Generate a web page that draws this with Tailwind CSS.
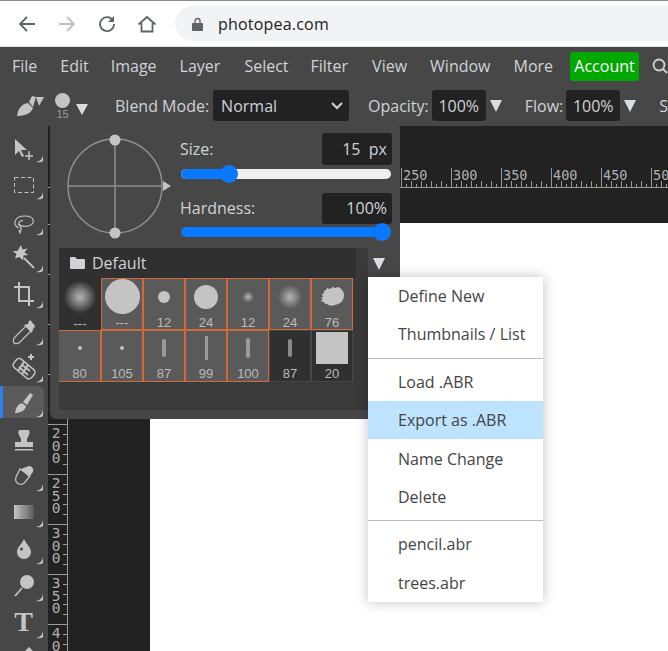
<!DOCTYPE html>
<html lang="en">

<head>
    <meta charset="UTF-8">
    <title>Photopea</title>
    <script src="https://cdn.jsdelivr.net/npm/@tailwindcss/browser@4"></script>
</head>

<body class="bg-[#222222] overflow-hidden">
    <div class="relative w-[668px] h-[651px] overflow-hidden flex flex-col font-['Open_Sans',sans-serif]">

        <!-- browser bar -->
        <div class="h-[47px] shrink-0 bg-white border-t border-[#8c8c8c] border-b border-b-[#e2e2e2] flex items-center">
            <div class="w-[175px] shrink-0 flex items-center pl-[17px] gap-[20px]">
                <svg class="w-5 h-5" viewBox="0 0 20 20" fill="none" stroke="#5f6368" stroke-width="1.8"><path d="M18 10H3M10 3l-7 7 7 7" /></svg>
                <svg class="w-5 h-5" viewBox="0 0 20 20" fill="none" stroke="#bdc1c6" stroke-width="1.8"><path d="M2 10h15M10 3l7 7-7 7" /></svg>
                <svg class="w-5 h-5" viewBox="0 0 20 20" fill="none" stroke="#5f6368" stroke-width="1.8"><path d="M16 6.5A7 7 0 1 0 17 10" /><path d="M17 2v6h-6" fill="#5f6368" stroke="none" /></svg>
                <svg class="w-5 h-5" viewBox="0 0 20 20" fill="none" stroke="#5f6368" stroke-width="1.8"><path d="M1.5 10.5 10 3l8.500 7.500M4.500 9v8.500h11V9" /></svg>
            </div>
            <div class="flex-1 h-[35px] bg-[#f1f3f4] rounded-l-full flex items-center pl-[17px] gap-[15px]">
                <svg class="w-[11px] h-[14px]" viewBox="0 0 11 14" fill="#5f6368"><path d="M1 6h9a1 1 0 0 1 1 1v6a1 1 0 0 1-1 1H1a1 1 0 0 1-1-1V7a1 1 0 0 1 1-1z" /><path d="M3 6V4a2.500 2.500 0 0 1 5 0v2" fill="none" stroke="#5f6368" stroke-width="1.300" /></svg>
                <span class="text-[16px] text-[#202124] tracking-[0.2px]">photopea.com</span>
            </div>
        </div>

        <!-- menu bar -->
        <div class="h-[39px] shrink-0 bg-[#474747] flex items-center pl-[12px] pb-[1px] text-[16px] text-[#cfd3d6] whitespace-nowrap">
            <span>File</span>
            <span class="ml-[23px]">Edit</span>
            <span class="ml-[22px]">Image</span>
            <span class="ml-[23px]">Layer</span>
            <span class="ml-[24px]">Select</span>
            <span class="ml-[22px]">Filter</span>
            <span class="ml-[24px]">View</span>
            <span class="ml-[23px]">Window</span>
            <span class="ml-[23px]">More</span>
            <span class="ml-[17px] h-[29px] w-[74px] flex items-center justify-center bg-[#00a800] rounded-[3px] text-white">Account</span>
            <svg class="ml-[13px] w-[16px] h-[16px] shrink-0" viewBox="0 0 16 16" fill="none" stroke="#cfd3d6" stroke-width="1.800"><circle cx="7" cy="7" r="5.500" /><path d="M11 11l4 4" /></svg>
        </div>

        <!-- tool options -->
        <div class="h-[40px] shrink-0 bg-[#474747] flex items-center pb-[1px] text-[16px] text-[#cfd3d6] whitespace-nowrap">
            <svg class="ml-[16px] w-[28px] h-[22px] shrink-0" viewBox="0 0 28 22" fill="#c4c4c4"><path d="M1 21C2 13 6 9 12 8l5 5c-2 6-9 8-16 8z" /><path d="M13 7l3-6 4 1-3 10z" /><path d="M20 2h8l-5 9z" /></svg>
            <div class="ml-[11px] mt-[3px] w-[15px] flex flex-col items-center shrink-0">
                <div class="w-[15px] h-[15px] rounded-full bg-[#c4c4c4]"></div>
                <span class="text-[11px] leading-[13px] text-[#999999] font-['Liberation_Sans',sans-serif]">15</span>
            </div>
            <div class="ml-[6px] mt-[8px] w-0 h-0 border-x-[6px] border-x-transparent border-t-[11px] border-t-[#d8dde0]"></div>
            <span class="ml-[27px]">Blend Mode:</span>
            <div class="ml-[4px] w-[136px] h-[31px] bg-[#222222] rounded-[3px] flex items-center justify-between pl-[8px] pr-[6px]">
                <span>Normal</span>
                <svg class="w-[12px] h-[8px]" viewBox="0 0 12 8" fill="none" stroke="#cfd3d6" stroke-width="2"><path d="M1 1l5 5 5-5" /></svg>
            </div>
            <span class="ml-[19px]">Opacity:</span>
            <div class="ml-[3px] w-[54px] h-[31px] bg-[#222222] rounded-[3px] flex items-center justify-center">100%</div>
            <div class="ml-[4px] w-0 h-0 border-x-[6px] border-x-transparent border-t-[12px] border-t-[#d8dde0]"></div>
            <span class="ml-[23px]">Flow:</span>
            <div class="ml-[3px] w-[54px] h-[31px] bg-[#222222] rounded-[3px] flex items-center justify-center">100%</div>
            <div class="ml-[4px] w-0 h-0 border-x-[6px] border-x-transparent border-t-[12px] border-t-[#d8dde0]"></div>
            <span class="ml-[23px]">S</span>
        </div>

        <!-- work area -->
        <div class="flex-1 flex min-h-0">
            <!-- tools -->
            <div class="w-[48px] shrink-0 bg-[#474747] pt-[4px] flex flex-col">
                <svg class="w-[48px] h-[36.600px] shrink-0" viewBox="0 0 48 36.600" fill="#c4c4c4"><path d="M15 9l0 16 4-4 3 6 2-1-3-6 6 0z" /><path d="M29 21v9M25 26h8" stroke="#c4c4c4" stroke-width="1.500" fill="none" /><path d="M43 25q-1 6-7 7q5 1 7-1z" /></svg>
                <svg class="w-[48px] h-[36.600px] shrink-0" viewBox="0 0 48 36.600" fill="none" stroke="#c4c4c4"><rect x="14.500" y="10.500" width="19" height="15" stroke-dasharray="4 2.500" /><path d="M43 25q-1 6-7 7q5 1 7-1z" fill="#c4c4c4" stroke="none" /></svg>
                <svg class="w-[48px] h-[36.600px] shrink-0" viewBox="0 0 48 36.600" fill="none" stroke="#c4c4c4" stroke-width="1.200"><path d="M19 25c-7-3-5-12 6-12 10 0 11 8 3 10-4 1-8 0-9-2-1-2 2-4 4-3M18 21c3 2 4 5 2 9l-1-3" /><path d="M43 25q-1 6-7 7q5 1 7-1z" fill="#c4c4c4" stroke="none" /></svg>
                <svg class="w-[48px] h-[36.600px] shrink-0" viewBox="0 0 48 36.600" fill="#c4c4c4"><path d="M21 5l1.500 4.500 5-1-3 4 4 2.500-5 .5-.5 5-3.500-3.500-4.500 1.500 1.500-4.500-4-3 5 0z" /><path d="M24 18l10 10" stroke="#c4c4c4" stroke-width="1.800" /><path d="M43 25q-1 6-7 7q5 1 7-1z" /></svg>
                <svg class="w-[48px] h-[36.600px] shrink-0" viewBox="0 0 48 36.600" fill="none" stroke="#c4c4c4" stroke-width="2"><path d="M19 6v19h15M14 11h15v19" /><path d="M43 25q-1 6-7 7q5 1 7-1z" fill="#c4c4c4" stroke="none" /></svg>
                <svg class="w-[48px] h-[36.600px] shrink-0" viewBox="0 0 48 36.600" fill="#c4c4c4"><path d="M26 13l5 5-11 11c-2 2-5 2-6 1s-1-4 1-6z" fill="none" stroke="#c4c4c4" stroke-width="1.200" /><path d="M24 12l8 8 1-4 1-1c2-2 0-4-1-4-1-3-3-4-4-3l-1 3z" /><path d="M43 25q-1 6-7 7q5 1 7-1z" /></svg>
                <svg class="w-[48px] h-[36.600px] shrink-0" viewBox="0 0 48 36.600" fill="none" stroke="#c4c4c4" stroke-width="1.500"><rect x="13" y="13" width="23" height="11" rx="3.500" transform="rotate(40 24 18)" /><path d="M21 14l9 7M19 17l9 8M24 12l-6 9M28 15l-6 9" stroke-width="1.800" /><path d="M31 4v6M28 7h6" stroke-width="2" /><path d="M43 25q-1 6-7 7q5 1 7-1z" fill="#c4c4c4" stroke="none" /></svg>

                <!-- active brush tool -->
                <div class="h-[32px] mb-[4.400px] shrink-0 border-l-[3px] border-[#2f80ed]">
                    <div class="w-[41px] h-[32px] rounded-r-[6px] bg-[#5a5a5a]">
                        <svg class="w-[41px] h-[32px]" viewBox="3 0 41 32" fill="#c4c4c4"><path d="M15 27c1-6 3-9 7-10l4 3c-1 5-6 7-11 7z" /><path d="M23 16l7-9 3 2-6 10z" /><path d="M43 24q-1 6-7 7q5 1 7-1z" /></svg>
                    </div>
                </div>

                <svg class="w-[48px] h-[36.600px] shrink-0" viewBox="0 0 48 36.600" fill="#c4c4c4"><g transform="translate(0 2)"><path d="M20 5h8c2 0 2 3 1 5l-2 4v3h6v5H15v-5h6v-3l-2-4c-1-2-1-5 1-5z" /><rect x="15" y="24" width="18" height="1.500" /></g></svg>
                <svg class="w-[48px] h-[36.600px] shrink-0" viewBox="0 0 48 36.600" fill="#c4c4c4"><g transform="translate(0 2)"><path d="M21 8l8-3c3 0 5 3 4 6l-4 5z" /><path d="M20 8l-4 8c-1 3 0 6 3 7s5 0 6-2l5-6z" fill="none" stroke="#c4c4c4" stroke-width="1.300" /></g><path d="M43 25q-1 6-7 7q5 1 7-1z" /></svg>
                <svg class="w-[48px] h-[36.600px] shrink-0" viewBox="0 0 48 36.600"><defs><linearGradient id="grad"><stop offset="0" stop-color="#c4c4c4" /><stop offset="1" stop-color="#5a5a5a" /></linearGradient></defs><rect x="14" y="9" width="20" height="14" fill="url(#grad)" /><path d="M43 24q-1 6-7 7q5 1 7-1z" fill="#c4c4c4" /></svg>
                <svg class="w-[48px] h-[36.600px] shrink-0" viewBox="0 0 48 36.600" fill="#c4c4c4"><path d="M24 7c2 5 7 8 7 13a7 7 0 0 1-14 0c0-5 5-8 7-13z" /><circle cx="21.500" cy="17" r="1.500" fill="#474747" /><path d="M43 25q-1 6-7 7q5 1 7-1z" /></svg>
                <svg class="w-[48px] h-[36.600px] shrink-0" viewBox="0 0 48 36.600" fill="#c4c4c4"><circle cx="27" cy="13" r="7" /><path d="M22 19L15 27" stroke="#c4c4c4" stroke-width="1.800" /><path d="M43 25q-1 6-7 7q5 1 7-1z" /></svg>
                <div class="relative w-[48px] h-[36.600px] shrink-0 flex items-center justify-center pr-[1px] pb-[4px] font-['Liberation_Serif',serif] font-bold text-[28px] leading-none text-[#c4c4c4]">T
                    <svg class="absolute left-0 top-0 w-[48px] h-[36.600px]" viewBox="0 0 48 36.600" fill="#c4c4c4"><path d="M43 25q-1 6-7 7q5 1 7-1z" /></svg>
                </div>
                <svg class="w-[48px] h-[36.600px] shrink-0" viewBox="0 0 48 36.600" fill="#c4c4c4"><path d="M29 5l5 5-5 5-5-5z" /></svg>
            </div>

            <!-- left ruler strip and canvas -->
            <div class="flex-1 flex flex-col min-w-0">
                <div class="h-[42px] shrink-0 bg-[#222222]"></div>
                <!-- top ruler -->
                <div class="relative h-[20px] shrink-0 pl-[353px] border-b border-[#999999] flex font-['DejaVu_Sans_Mono',monospace] text-[13.500px] leading-[13px] text-[#b0b0b0]">
                    <div class="absolute left-[3px] right-0 bottom-0 h-[3px] bg-[repeating-linear-gradient(90deg,#999999_0,#999999_1px,transparent_1px,transparent_5px)]"></div>
                    <div class="absolute left-[3px] right-0 bottom-0 h-[6px] bg-[repeating-linear-gradient(90deg,#999999_0,#999999_1px,transparent_1px,transparent_10px)]"></div>
                    <div class="w-[50px] shrink-0 border-l border-[#999999] pl-[1px] pt-[1px]">250</div>
                    <div class="w-[50px] shrink-0 border-l border-[#999999] pl-[1px] pt-[1px]">300</div>
                    <div class="w-[50px] shrink-0 border-l border-[#999999] pl-[1px] pt-[1px]">350</div>
                    <div class="w-[50px] shrink-0 border-l border-[#999999] pl-[1px] pt-[1px]">400</div>
                    <div class="w-[50px] shrink-0 border-l border-[#999999] pl-[1px] pt-[1px]">450</div>
                    <div class="w-[50px] shrink-0 border-l border-[#999999] pl-[1px] pt-[1px]">500</div>
                </div>
                <div class="flex-1 flex min-h-0">
                    <!-- left ruler -->
                    <div class="relative w-[20px] shrink-0 border-r border-[#999999] pt-[36px] font-['DejaVu_Sans_Mono',monospace] text-[14.500px] leading-[12.500px] text-[#b0b0b0] text-center pr-[3px] overflow-hidden">
                        <div class="absolute top-[6px] bottom-0 right-0 w-[4px] bg-[repeating-linear-gradient(180deg,#999999_0,#999999_1px,transparent_1px,transparent_10px)]"></div>
                        <div class="h-[50px] border-t border-[#999999] -mr-[3px]"></div>
                        <div class="h-[50px] border-t border-[#999999] -mr-[3px]"></div>
                        <div class="h-[50px] border-t border-[#999999] -mr-[3px]"></div>
                        <div class="h-[50px] border-t border-[#999999] -mr-[3px]"></div>
                        <div class="h-[50px] border-t border-[#999999] -mr-[3px] pr-[3px] pt-[2px]">2<br>0<br>0</div>
                        <div class="h-[50px] border-t border-[#999999] -mr-[3px] pr-[3px] pt-[2px]">2<br>5<br>0</div>
                        <div class="h-[50px] border-t border-[#999999] -mr-[3px] pr-[3px] pt-[2px]">3<br>0<br>0</div>
                        <div class="h-[50px] border-t border-[#999999] -mr-[3px] pr-[3px] pt-[2px]">3<br>5<br>0</div>
                        <div class="h-[50px] border-t border-[#999999] -mr-[3px] pr-[3px] pt-[2px]">4<br>0<br>0</div>
                    </div>
                    <div class="flex-1 flex flex-col min-w-0 pl-[82px] pt-[35px] bg-[#222222]">
                        <div class="flex-1 bg-white"></div>
                    </div>
                </div>
            </div>
        </div>

        <!-- brush panel -->
        <div class="absolute left-[50px] top-[122px] w-[350px] h-[297px] bg-[#474747] rounded-[6px]">
            <div class="h-[126px] relative">
                <svg class="absolute left-[10.500px] top-[8px] w-[112px] h-[112px]" viewBox="0 0 112 112" fill="none" stroke="#8f8f8f" stroke-width="1.500">
                    <circle cx="54" cy="56" r="47" />
                    <path d="M7 56h94M54 9v94" />
                    <circle cx="54" cy="10" r="5.500" fill="#c4c4c4" stroke="none" />
                    <circle cx="54" cy="103" r="5.500" fill="#c4c4c4" stroke="none" />
                    <path d="M102 51l8 5-8 5z" fill="#c4c4c4" stroke="none" />
                </svg>
                <div class="absolute left-[130px] top-[11px] w-[212px] text-[16px] text-[#cfd3d6]">
                    <div class="flex items-center justify-between h-[32px]">
                        <span>Size:</span>
                        <div class="w-[70px] h-[32px] bg-[#222222] rounded-[3px] flex items-center justify-end pr-[5px]">15&nbsp; px</div>
                    </div>
                    <div class="relative mt-[4px] ml-[1px] w-[210px] h-[10px] rounded-full bg-[#eeeeee]">
                        <div class="h-[10px] w-[45px] rounded-l-full bg-[#0a78ff]"></div>
                        <div class="absolute left-[39px] -top-[4px] w-[18px] h-[18px] rounded-full bg-[#0a78ff]"></div>
                    </div>
                    <div class="flex items-center justify-between h-[32px] mt-[13px]">
                        <span>Hardness:</span>
                        <div class="w-[70px] h-[31px] bg-[#222222] rounded-[3px] flex items-center justify-end pr-[5px]">100%</div>
                    </div>
                    <div class="relative mt-[3px] ml-[1px] w-[210px] h-[10px] rounded-full bg-[#0a78ff]">
                        <div class="absolute right-0 -top-[4px] w-[18px] h-[18px] rounded-full bg-[#0a78ff]"></div>
                    </div>
                </div>
            </div>

            <!-- brush list -->
            <div class="ml-[9px] w-[309px] h-[162px] bg-[#3a3a3a]">
                <div class="w-[297px] h-[30px] bg-[#303030] flex items-center pl-[11px] gap-[7px] text-[16px] text-[#cfd3d6]">
                    <svg class="w-[15px] h-[12px]" viewBox="0 0 15 12" fill="#cfd3d6"><path d="M0 1a1 1 0 0 1 1-1h4l2 2h7a1 1 0 0 1 1 1v8a1 1 0 0 1-1 1H1a1 1 0 0 1-1-1z" /></svg>
                    <span>Default</span>
                </div>
                <div class="grid grid-cols-[repeat(7,42px)] auto-rows-[52px] w-[294px] font-['Liberation_Sans',sans-serif] text-[13px] leading-[13px] text-[#bbbbbb] text-center">
                    <div class="flex flex-col items-center bg-[#303030]"><div class="h-[39px] pb-[2px] flex items-center justify-center"><div class="w-[32px] h-[32px] rounded-full bg-[radial-gradient(circle,#b5b5b5_0,#777777_35%,#303030_72%)]"></div></div><span>---</span></div>
                    <div class="flex flex-col items-center bg-[#5a5a5a] border border-[#d2693a]"><div class="h-[38px] pb-[2px] flex items-center justify-center"><div class="w-[35px] h-[35px] rounded-full bg-[#c4c4c4]"></div></div><span>---</span></div>
                    <div class="flex flex-col items-center bg-[#5a5a5a] border border-[#d2693a]"><div class="h-[38px] pb-[2px] flex items-center justify-center"><div class="w-[12px] h-[12px] rounded-full bg-[#c4c4c4]"></div></div><span>12</span></div>
                    <div class="flex flex-col items-center bg-[#5a5a5a] border border-[#d2693a]"><div class="h-[38px] pb-[2px] flex items-center justify-center"><div class="w-[24px] h-[24px] rounded-full bg-[#c4c4c4]"></div></div><span>24</span></div>
                    <div class="flex flex-col items-center bg-[#5a5a5a] border border-[#d2693a]"><div class="h-[38px] pb-[2px] flex items-center justify-center"><div class="w-[12px] h-[12px] rounded-full bg-[radial-gradient(circle,#b5b5b5_0,#5a5a5a_70%)]"></div></div><span>12</span></div>
                    <div class="flex flex-col items-center bg-[#5a5a5a] border border-[#d2693a]"><div class="h-[38px] pb-[2px] flex items-center justify-center"><div class="w-[24px] h-[24px] rounded-full bg-[radial-gradient(circle,#b5b5b5_0,#5a5a5a_70%)]"></div></div><span>24</span></div>
                    <div class="flex flex-col items-center bg-[#5a5a5a] border border-[#d2693a]"><div class="h-[38px] pb-[2px] flex items-center justify-center"><svg class="w-[26px] h-[20px]" viewBox="0 0 26 20" fill="#c4c4c4"><path d="M5 4l2-1 1-2 3 1 3-2 2 1 3-1c3 1 6 4 6 8 0 6-4 9-9 10-3 1-6 1-8-1-2 0-3-1-3-2l-4-1 3-1-2-2 2-1-1-3 2-1z" /></svg></div><span>76</span></div>

                    <div class="flex flex-col items-center bg-[#5a5a5a] border-y border-r border-[#d2693a]"><div class="h-[36px] pb-[2px] flex items-center justify-center"><div class="w-[4px] h-[4px] rounded-full bg-[#c4c4c4]"></div></div><span>80</span></div>
                    <div class="flex flex-col items-center bg-[#5a5a5a] border border-[#d2693a]"><div class="h-[36px] pb-[2px] flex items-center justify-center"><div class="w-[4px] h-[4px] rounded-full bg-[#c4c4c4]"></div></div><span>105</span></div>
                    <div class="flex flex-col items-center bg-[#5a5a5a] border border-[#d2693a]"><div class="h-[36px] pb-[2px] flex items-center justify-center"><div class="w-[4px] h-[18px] rounded-full bg-[#9a9a9a]"></div></div><span>87</span></div>
                    <div class="flex flex-col items-center bg-[#5a5a5a] border border-[#d2693a]"><div class="h-[36px] pb-[2px] flex items-center justify-center"><div class="w-[3px] h-[24px] bg-[#9a9a9a]"></div></div><span>99</span></div>
                    <div class="flex flex-col items-center bg-[#5a5a5a] border border-[#d2693a]"><div class="h-[36px] pb-[2px] flex items-center justify-center"><div class="w-[4px] h-[20px] rounded-full bg-[#9a9a9a]"></div></div><span>100</span></div>
                    <div class="flex flex-col items-center bg-[#303030] border border-[#474747]"><div class="h-[36px] pb-[2px] flex items-center justify-center"><div class="w-[4px] h-[18px] rounded-full bg-[#8a8a8a]"></div></div><span>87</span></div>
                    <div class="flex flex-col items-center bg-[#303030] border border-[#474747]"><div class="h-[36px] pb-[2px] flex items-center justify-center"><div class="w-[32px] h-[32px] bg-[#c4c4c4]"></div></div><span>20</span></div>
                </div>
            </div>
            <div class="absolute left-[323px] top-[136px] w-0 h-0 border-x-[6px] border-x-transparent border-t-[12px] border-t-[#d8dde0]"></div>
        </div>

        <!-- brush presets menu -->
        <div class="absolute left-[368px] top-[277px] w-[175px] bg-white shadow-[0_0_12px_rgba(0,0,0,0.25)] text-[16px] text-[#444444] whitespace-nowrap">
            <div class="h-[38px] flex items-center pl-[30px]">Define New</div>
            <div class="h-[38px] flex items-center pl-[30px]">Thumbnails / List</div>
            <div class="h-[10px] flex items-center"><div class="w-full h-px bg-[#bbbbbb]"></div></div>
            <div class="h-[38px] flex items-center pl-[30px]">Load .ABR</div>
            <div class="h-[38px] flex items-center pl-[30px] bg-[#bde3ff]">Export as .ABR</div>
            <div class="h-[39px] flex items-center pl-[30px]">Name Change</div>
            <div class="h-[38px] flex items-center pl-[30px]">Delete</div>
            <div class="h-[8px] flex items-center"><div class="w-full h-px bg-[#bbbbbb]"></div></div>
            <div class="h-[39px] flex items-center pl-[30px]">pencil.abr</div>
            <div class="h-[39px] flex items-center pl-[30px]">trees.abr</div>
        </div>
    </div>
</body>

</html>
